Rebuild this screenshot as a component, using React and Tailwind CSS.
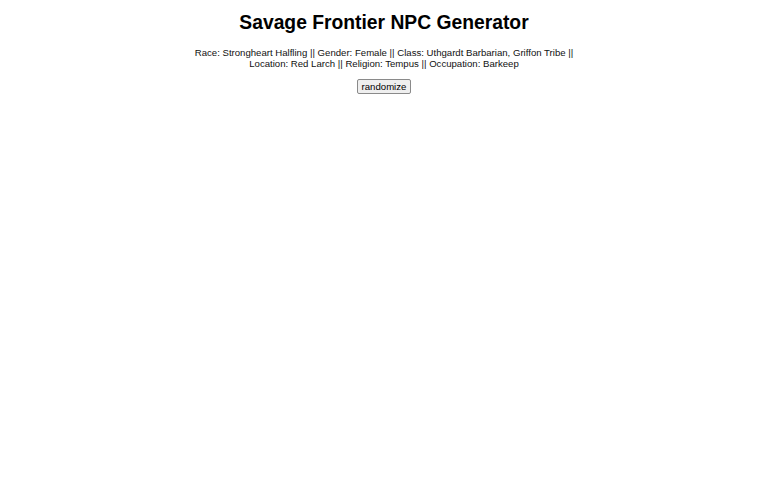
export default function App() {
  return (
    <div className="min-h-[480px] bg-white text-black flex flex-col items-center" style={{ fontFamily: '"Liberation Sans", Arial, sans-serif' }}>
      <h1 className="text-[19.3px] font-bold leading-[24px] mt-[11px]">Savage Frontier NPC Generator</h1>
      <p className="text-[9.6px] leading-[11px] text-center w-[384px] mt-[12px] text-[#111]">
        Race: Strongheart Halfling || Gender: Female || Class: Uthgardt Barbarian, Griffon Tribe || Location: Red Larch || Religion: Tempus || Occupation: Barkeep
      </p>
      <button className="mt-[10px] text-[9.6px] leading-[11px] px-[4px] py-[1px] border border-[#8a8a8a] rounded-[2px] bg-[#efefef] text-black">
        randomize
      </button>
    </div>
  );
}
